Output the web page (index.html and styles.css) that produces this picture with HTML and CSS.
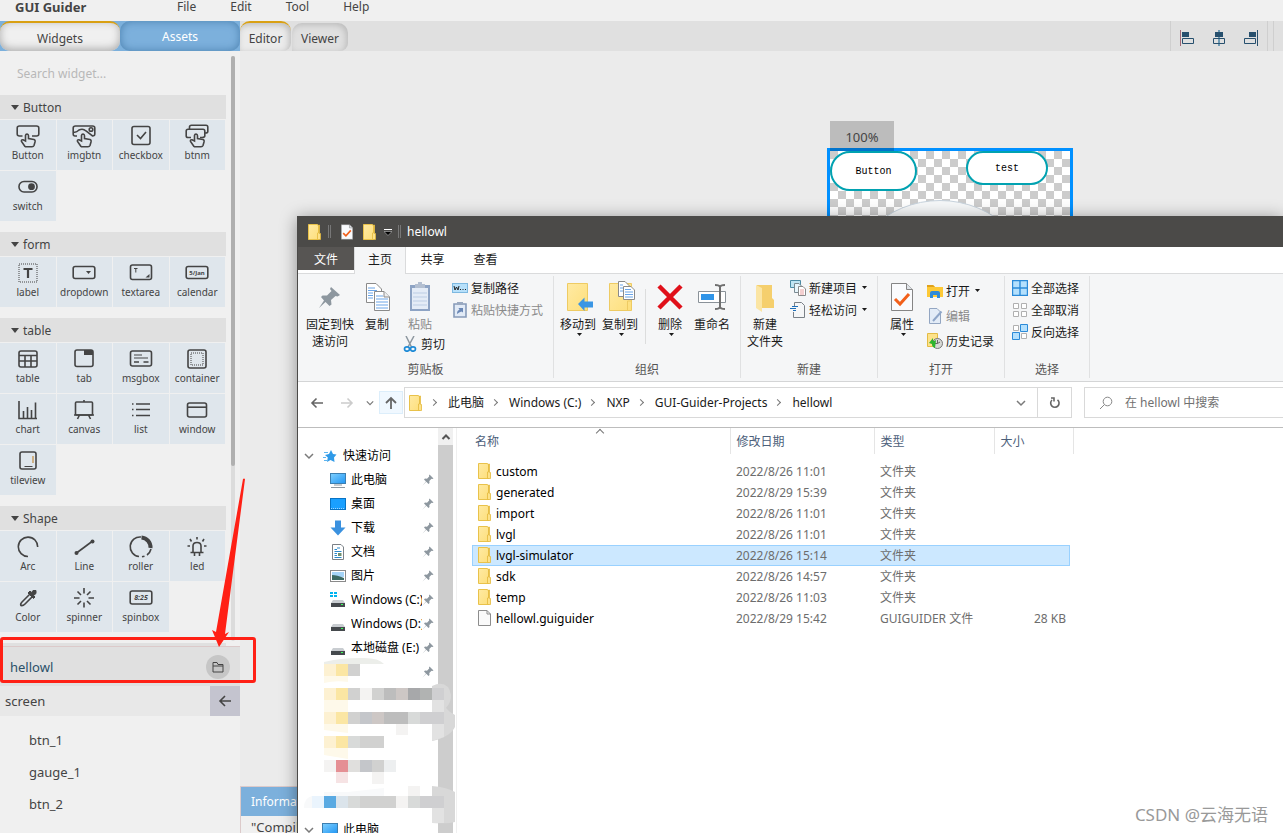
FILE: index.html
```
<!DOCTYPE html>
<html lang="zh-CN">
<head>
  <meta charset="UTF-8">
  <meta name="viewport" content="width=device-width, initial-scale=1.0">
  <title>GUI Guider</title>
  <link rel="stylesheet" href="styles.css">
</head>
<body>
  <!-- icon sprite -->
  <svg class="sprite" aria-hidden="true">
    <defs>
      <linearGradient id="g-blue" x1="0" y1="0" x2="1" y2="1"><stop offset="0" stop-color="#7fd0ff"/><stop offset="1" stop-color="#2196f3"/></linearGradient>
      <linearGradient id="g-gold" x1="0" y1="0" x2="1" y2="1"><stop offset="0" stop-color="#ffeaa3"/><stop offset="1" stop-color="#fddf7c"/></linearGradient>
    </defs>
    <g>
      <symbol id="hand" viewBox="0 0 24 24"><path d="M9 22.500L5.500 17.500Q5 15.500 7 15.700L9.500 17V11.500Q9.800 10 11 10Q12.400 10.200 12.500 11.800V14.500L18 15.500Q19.500 16 19 18L18 21.500Q17.500 22.800 16 22.800H9.500Z"/></symbol>
      <symbol id="w-button" viewBox="0 0 24 24"><path d="M6.500 12H3.500Q1.200 12 1.200 10V4Q1.200 2 3.500 2H20.500Q22.800 2 22.800 4V10Q22.800 12 20.500 12H16"/><use href="#hand"/></symbol>
      <symbol id="w-imgbtn" viewBox="0 0 24 24"><path d="M5 12H3Q1.200 12 1.200 10V4Q1.200 2 3.500 2H20.500Q22.800 2 22.800 4V10Q22.800 12 20.500 12L14 7Q11 4 7 6Q4 9 1.500 8"/><circle cx="19" cy="5.500" r="1.800"/><use href="#hand"/></symbol>
      <symbol id="w-checkbox" viewBox="0 0 24 24"><rect x="3" y="2.500" width="18" height="18" rx="2"/><path d="M8 11L11.500 14.500L17 8"/></symbol>
      <symbol id="w-btnm" viewBox="0 0 24 24"><path d="M4.500 5V3Q4.500 1.200 6.500 1.200H21Q22.800 1.200 22.800 3V7.500Q22.800 9 20.500 9H19.500"/><path d="M6 13.500H3Q1.200 13.500 1.200 12V7Q1.200 5.200 3 5.200H18Q19.800 5.200 19.800 7V12Q19.500 13.500 17 13.500H15"/><use href="#hand"/></symbol>
      <symbol id="w-switch" viewBox="0 0 24 24"><rect x="3" y="6.500" width="18" height="10.500" rx="5"/><circle cx="15.500" cy="11.700" r="2.600" fill="currentColor"/></symbol>
      <symbol id="w-label" viewBox="0 0 24 24"><rect x="3" y="3" width="18" height="18" stroke-width="1" stroke-dasharray="1 1"/><path d="M7.500 8H16.500M12 8V17" stroke-width="2.200"/></symbol>
      <symbol id="w-dropdown" viewBox="0 0 24 24"><rect x="1.200" y="5.500" width="21.600" height="12" rx="2"/><path d="M14 10H19L16.500 13Z" fill="currentColor" stroke="none"/></symbol>
      <symbol id="w-textarea" viewBox="0 0 24 24"><rect x="1.500" y="4" width="21" height="14.500" rx="2"/><path d="M5 7.500H8.500M6.800 7.500V11.500" stroke-width="1"/><path d="M20.500 13V16.500H16.500Z" fill="currentColor" stroke="none"/></symbol>
      <symbol id="w-table" viewBox="0 0 24 24"><rect x="3" y="4" width="18" height="16" rx="2"/><path d="M3 8.500H21M3 14H21M9 8.500V20M15 8.500V20"/></symbol>
      <symbol id="w-tab" viewBox="0 0 24 24"><rect x="3" y="3" width="18" height="16.500" rx="2"/><path d="M12 3H21V8H12Z" fill="currentColor" stroke="none"/></symbol>
      <symbol id="w-msgbox" viewBox="0 0 24 24"><rect x="1.500" y="4" width="21" height="15" rx="2"/><path d="M5 8H13M5 11H19" stroke-width="1"/><path d="M5 15H10M14.500 15H19.500"/></symbol>
      <symbol id="w-container" viewBox="0 0 24 24"><rect x="3" y="3" width="18" height="18" rx="2"/><rect x="6" y="6" width="12" height="12" stroke-width="1" stroke-dasharray="1 1"/></symbol>
      <symbol id="w-chart" viewBox="0 0 24 24"><path d="M3 3V20.500H21M7.500 20V13M11.500 20V9M15.500 20V12M19.500 20V4.500"/></symbol>
      <symbol id="w-canvas" viewBox="0 0 24 24"><rect x="3.500" y="4" width="17" height="13" rx="1"/><path d="M2 17H22M12 4V2M7.500 17L5.500 21M16.500 17L18.500 21"/></symbol>
      <symbol id="w-list" viewBox="0 0 24 24"><path d="M7 6H21M7 11.500H21M7 17.500H21M3 6H4.500M3 11.500H4.500M3 17.500H4.500"/></symbol>
      <symbol id="w-window" viewBox="0 0 24 24"><rect x="2.500" y="5" width="19" height="14" rx="2"/><path d="M2.500 9.200H21.500"/></symbol>
      <symbol id="w-tileview" viewBox="0 0 24 24"><rect x="4" y="3" width="16" height="17" rx="2"/><path d="M8.500 17.500H16.500" stroke-width="1"/><path d="M17 7V14" stroke="#c9a26a"/></symbol>
      <symbol id="w-arc" viewBox="0 0 24 24"><path d="M12 21.500A9.700 9.700 0 1 1 21.700 12"/></symbol>
      <symbol id="w-line" viewBox="0 0 24 24"><path d="M4.500 18L20 6.500"/><circle cx="4.500" cy="18" r="2" fill="currentColor" stroke="none"/><circle cx="20.500" cy="6.500" r="2" fill="currentColor" stroke="none"/></symbol>
      <symbol id="w-roller" viewBox="0 0 24 24"><path d="M10 21.500A9.800 9.800 0 0 1 12 2M22 14Q21 18 18 20M15.500 21.200L13 21.800"/><path d="M12.500 2.500A9.800 9.800 0 0 1 21.500 13" stroke-width="4"/></symbol>
      <symbol id="w-led" viewBox="0 0 24 24"><path d="M8 17V11Q8 7.500 12 7.500Q16 7.500 16 11V17M5.500 17.500H18.500M9.500 17.500V21M14.500 17.500V21M12 4.500V2M6.500 6.500L5 4M17.500 6.500L19 4M5 11H2.500M19 11H21.500"/></symbol>
      <symbol id="w-color" viewBox="0 0 24 24"><path d="M14 8L6 16Q4 18 5 19.500Q7 20 9 18L16.500 10.500"/><path d="M12 7L14 5L15.500 6.500L17 4.500H20V7.500L17.500 9.500L19 11L17.500 12.500Z" fill="currentColor" stroke-width="1"/></symbol>
      <symbol id="w-spinner" viewBox="0 0 24 24"><path d="M12 2V7.500M12 16.500V21.500M2 12H7.500M16.500 12H22M5.500 5.500L9 9M15 15L18.500 18.500M5.500 18.500L9 15M15 9L18.500 5.500"/></symbol>

      <symbol id="folder" viewBox="0 0 14 16"><path d="M.5.5H9.500L10.500 2V15.500H.5Z" fill="url(#g-gold)" stroke="#e9c24a"/><path d="M10.500 1V9H9.500V15.500H12.500V9.500H11.500V1Z" fill="#fde28a" stroke="#e3b93b" stroke-width=".8"/></symbol>
      <symbol id="file" viewBox="0 0 14 16"><path d="M.5.5H9L12.500 4V15.500H.5Z" fill="#fafafa" stroke="#8d8d8d"/><path d="M9 .5V4H12.500" fill="none" stroke="#8d8d8d"/></symbol>
      <symbol id="checked-file" viewBox="0 0 22 28"><path d="M.5.5H15.500L21.500 6.500V27.500H.5Z" fill="#fafbfd" stroke="#858585"/><path d="M15.500.5V6.500H21.500" fill="#dfe3e8" stroke="#858585"/><path d="M4 16L9 21L18 11" fill="none" stroke="#f2601b" stroke-width="3"/></symbol>
      <symbol id="pin" viewBox="0 0 12 12"><path d="M7.500.5L11.500 4.500L10.300 5L9.500 4.800L7.300 7L7.500 9L6.500 10L4.300 7.800L.5 11.500L4 7.500L2 5.500L3 4.500L5 4.700L7.200 2.500L7 1.500Z" fill="#8d979f"/></symbol>
      <symbol id="monitor" viewBox="0 0 16 16"><rect x=".5" y="1.500" width="15" height="10" fill="url(#g-blue)" stroke="#3c7fb1"/><path d="M4 13H12M1 15.500H15" stroke="#8d979f"/></symbol>
      <symbol id="desktop" viewBox="0 0 16 16"><rect x=".5" y="2.500" width="15" height="11" fill="#1aa0ff" stroke="#0873c4"/><path d="M1 12.500H15" stroke="#9fd6ff" stroke-dasharray="1 1"/></symbol>
      <symbol id="download" viewBox="0 0 16 16"><path d="M5 .5H11V7.500H15.500L8 15.500L.5 7.500H5Z" fill="#3a91df"/></symbol>
      <symbol id="doc" viewBox="0 0 16 16"><path d="M2.500.5H11L13.500 3V15.500H2.500Z" fill="#fff" stroke="#7b8187"/><path d="M7 4H10M4.500 5.500H7M4.500 7.500H11.500M4.500 9.500H7M4.500 11.500H7M4.500 13.500H11.500" stroke="#2b88c9"/><path d="M8 9H11.500V12H8Z" fill="#6f8f6f"/></symbol>
      <symbol id="picture" viewBox="0 0 16 16"><rect x=".5" y="2.500" width="15" height="11" fill="#fff" stroke="#8a8a8a"/><path d="M2 4H14V9H2Z" fill="#a5d4f7"/><path d="M2 7Q7 7 14 10V12H2Z" fill="#3c6a63"/></symbol>
      <symbol id="drive" viewBox="0 0 16 16"><path d="M3 8H13L15 11H1Z" fill="#c9cdd1"/><rect x="1" y="11" width="14" height="4" fill="#45494d"/><rect x="11" y="12" width="2" height="1" fill="#3cff5a"/></symbol>
      <symbol id="windrive" viewBox="0 0 16 16"><use href="#drive"/><path d="M0 0H3V2H0ZM4 0H7V2H4ZM0 3H3V5H0ZM4 3H7V5H4Z" fill="#00b4f0"/></symbol>
      <symbol id="star" viewBox="0 0 16 16"><path d="M9 2L11 6L14.500 6.500L12 9.500L12.500 14L8.500 12L5 14L5.800 9.500L3 7L7 6Z" fill="#2f9ae8"/><path d="M2 4.500H6M1 9.500H4M2 12.500H5" stroke="#5cb4f0"/></symbol>
      <symbol id="chev" viewBox="0 0 10 10"><path d="M1 3L5 7L9 3" fill="none" stroke="#7a7a7a" stroke-width="1.500"/></symbol>
      <symbol id="caret" viewBox="0 0 5 3"><path d="M0 0H5L2.500 3Z" fill="#1a1a1a"/></symbol>

      <symbol id="r-pin" viewBox="0 0 32 32"><path d="M17 6L26 14L23.500 15.500L21.500 15L17 19L17.500 23.500L15.500 25L11.500 21L5 27L10 19.500L7 16L8.500 14.500L13 14.500L17.500 10L16 8Z" fill="#8d979f"/></symbol>
      <symbol id="r-copy" viewBox="0 0 32 32"><g fill="#fff" stroke="#8a8a8a"><path d="M5.500 2.500H15L20.500 8V21.500H5.500Z"/><path d="M13.500 10.500H23L28.500 16V29.500H13.500Z"/><path d="M23 10.500V16H28.500" fill="#eee"/></g><path d="M7 7H14M7 9.500H16M7 12H12M7 14.500H12M7 17H12M15 15H22M15 18H27M15 21H27M15 24H27M15 27H27" stroke="#6aa5e8"/></symbol>
      <symbol id="r-paste" viewBox="0 0 32 32"><path d="M6 4H26V30H6Z" fill="#8da3c4"/><path d="M8 7H24V28H8Z" fill="#e4ecf7"/><path d="M11 3H14V1H18V3H21V7H11Z" fill="#b3bfd1"/><path d="M9 12H23M9 16H23M9 20H23M9 24H23" stroke="#bccde4"/></symbol>
      <symbol id="r-path" viewBox="0 0 16 16"><rect x=".5" y="3.500" width="15" height="9" fill="#b7e0fa" stroke="#7db8e0"/><path d="M2 6L3 10L4.500 7L6 10L7 6M8 9.500H9M10.500 9.500H11.500M13 9.500H14" fill="none" stroke="#222"/></symbol>
      <symbol id="r-pastelink" viewBox="0 0 16 16"><path d="M2 2H14V15H2Z" fill="#e1eaf6" stroke="#879bb9" stroke-width="1.600"/><path d="M5 0H11V3H5Z" fill="#9aa9c0"/><path d="M5 12Q5 8 7.500 8L6.500 6H11V10.500L9.500 9.500Q7 10 5 12Z" fill="#6a87b5"/></symbol>
      <symbol id="r-cut" viewBox="0 0 16 16"><path d="M4 0L9.500 11M12 0L6 11" stroke="#8d979f" stroke-width="1.500"/><ellipse cx="5" cy="13" rx="2.500" ry="2.200" fill="none" stroke="#1d8ad6" stroke-width="1.700"/><ellipse cx="11" cy="13" rx="2.500" ry="2.200" fill="none" stroke="#1d8ad6" stroke-width="1.700"/></symbol>
      <symbol id="r-move" viewBox="0 0 32 32"><path d="M5.500 2.500H25.500V29.500H5.500Z" fill="url(#g-gold)" stroke="#eecb63"/><path d="M16 23L22.500 16.500V20.500H31V26.500H22.500V30Z" fill="#3a96e4"/></symbol>
      <symbol id="r-copyto" viewBox="0 0 32 32"><path d="M5.500 2.500H27.500V29.500H5.500ZM23.500 29.500V20H27.500" fill="url(#g-gold)" stroke="#eecb63"/><path d="M14.500.5H21L25 4.500V15.500H14.500Z" fill="#fff" stroke="#8a8a8a"/><path d="M19.500 5.500H27L30.500 9V18.500H19.500Z" fill="#fff" stroke="#8a8a8a"/><path d="M16 4H19M16 7H19M16 10H19M21 8.500H27M21 11H29M21 13.500H29M21 16H29" stroke="#6aa5e8"/></symbol>
      <symbol id="r-delete" viewBox="0 0 32 32"><path d="M5 5L27 27M27 5L5 27" stroke="#e0101a" stroke-width="4.500"/></symbol>
      <symbol id="r-rename" viewBox="0 0 32 32"><path d="M2.500 10.500H29.500V21.500H2.500Z" fill="#fff" stroke="#8a9299"/><path d="M5 13H18V19H5Z" fill="#2f94e8"/><path d="M19 4Q23.500 4 24 6Q24.500 4 29 4M24 6V26M19 28Q23.500 28 24 26Q24.500 28 29 28" fill="none" stroke="#6f6f6f" stroke-width="2"/></symbol>
      <symbol id="r-newfolder" viewBox="0 0 32 32"><path d="M8 4H23V17L25 19V27H8Z" fill="#f5cf6d"/><path d="M7 4L13 7V31L7 27Z" fill="#fbe5a4"/></symbol>
      <symbol id="r-newitem" viewBox="0 0 16 16"><path d="M.5.5H10.500V7.500H.5Z" fill="#bfe4f2" stroke="#4b8aa4"/><path d="M4.500 3.500H9L11.500 6V12.500H4.500Z" fill="#e8f5fb" stroke="#7a8a92"/><path d="M8.500 6.500H13L15.500 9V15.500H8.500Z" fill="#fff" stroke="#8a8a8a"/><path d="M10 10H14M10 12H14M10 14H14" stroke="#e9a0a0"/></symbol>
      <symbol id="r-easy" viewBox="0 0 16 16"><path d="M4.500.5H11.500L14.500 3.500V15.500H3.500V10M4.500.5V4" fill="none" stroke="#7a8086"/><path d="M2 4.500H8M0 6.500H6M3 8.500H6" stroke="#1f6fb8" stroke-width="1.200"/></symbol>
      <symbol id="r-open" viewBox="0 0 16 16"><path d="M0 2H6L8 4H16V14H0Z" fill="#fdc936"/><path d="M0 2H6L8 4H0Z" fill="#e0a21b"/><path d="M3 15V10Q3 8 5 8H11Q13 8 13 10V15H10V12H6V15Z" fill="#2f8ad8"/></symbol>
      <symbol id="r-edit" viewBox="0 0 16 16"><path d="M2.500.5H10L13.500 4V15.500H2.500Z" fill="#e3ecf7" stroke="#93a6c2"/><path d="M14.500 3.500L6 13" stroke="#8fa6c8" stroke-width="2"/></symbol>
      <symbol id="r-history" viewBox="0 0 16 16"><path d="M.5.5H10.500V13.500H.5Z" fill="#fde28a" stroke="#e3bb45"/><circle cx="10.500" cy="10.500" r="5" fill="#d6d8d4" stroke="#777"/><path d="M10.500 7V10.500L13 9M10.500 10.500H8" fill="none" stroke="#666"/><path d="M2 10L6 5V8Q8 8 9 7L8 15Q5 14 5 11Z" fill="#2db52d"/></symbol>
      <symbol id="r-all" viewBox="0 0 16 16"><path d="M.5.5H15.500V15.500H.5ZM8 .5V15.500M.5 8H15.500" fill="#b4e0fd" stroke="#2b8ad8" stroke-width="1.400"/></symbol>
      <symbol id="r-none" viewBox="0 0 16 16"><path d="M1.500 1.500H6.500V6.500H1.500ZM9.500 1.500H14.500V6.500H9.500ZM1.500 9.500H6.500V14.500H1.500ZM9.500 9.500H14.500V14.500H9.500Z" fill="#fff" stroke="#b0b0b0"/></symbol>
      <symbol id="r-invert" viewBox="0 0 16 16"><path d="M1.500 1.500H6.500V6.500H1.500ZM9.500 9.500H14.500V14.500H9.500Z" fill="#fff" stroke="#b0b0b0"/><path d="M8.500.5H15.500V7.500H8.500ZM.5 8.500H7.500V15.500H.5Z" fill="#b4e0fd" stroke="#2b8ad8"/></symbol>
    </g>
  </svg>

  <div class="app">
    <header class="menubar">
      <strong class="brand">GUI Guider</strong>
      <nav class="menus">
        <a href="#">File</a><a href="#">Edit</a><a href="#">Tool</a><a href="#">Help</a>
      </nav>
    </header>

    <div class="workspace">
      <aside class="sidebar">
        <div class="side-tabs">
          <button class="side-tab active">Widgets</button>
          <button class="side-tab">Assets</button>
        </div>

        <div class="widgets">
          <div class="widget-list">
            <input class="widget-search" type="text" placeholder="Search widget..." aria-label="Search widget">

            <h3 class="category">Button</h3>
            <div class="tiles">
              <button class="tile"><svg><use href="#w-button"/></svg>Button</button>
              <button class="tile"><svg><use href="#w-imgbtn"/></svg>imgbtn</button>
              <button class="tile"><svg><use href="#w-checkbox"/></svg>checkbox</button>
              <button class="tile"><svg><use href="#w-btnm"/></svg>btnm</button>
              <button class="tile"><svg><use href="#w-switch"/></svg>switch</button>
            </div>

            <h3 class="category">form</h3>
            <div class="tiles">
              <button class="tile"><svg><use href="#w-label"/></svg>label</button>
              <button class="tile"><svg><use href="#w-dropdown"/></svg>dropdown</button>
              <button class="tile"><svg><use href="#w-textarea"/></svg>textarea</button>
              <button class="tile"><svg viewBox="0 0 24 24"><rect x="1.200" y="5.500" width="21.600" height="12" rx="2"/><text x="12" y="14" text-anchor="middle" class="glyph">5/Jan</text></svg>calendar</button>
            </div>

            <h3 class="category">table</h3>
            <div class="tiles">
              <button class="tile"><svg><use href="#w-table"/></svg>table</button>
              <button class="tile"><svg><use href="#w-tab"/></svg>tab</button>
              <button class="tile"><svg><use href="#w-msgbox"/></svg>msgbox</button>
              <button class="tile"><svg><use href="#w-container"/></svg>container</button>
              <button class="tile"><svg><use href="#w-chart"/></svg>chart</button>
              <button class="tile"><svg><use href="#w-canvas"/></svg>canvas</button>
              <button class="tile"><svg><use href="#w-list"/></svg>list</button>
              <button class="tile"><svg><use href="#w-window"/></svg>window</button>
              <button class="tile"><svg><use href="#w-tileview"/></svg>tileview</button>
            </div>

            <h3 class="category">Shape</h3>
            <div class="tiles">
              <button class="tile"><svg><use href="#w-arc"/></svg>Arc</button>
              <button class="tile"><svg><use href="#w-line"/></svg>Line</button>
              <button class="tile"><svg><use href="#w-roller"/></svg>roller</button>
              <button class="tile"><svg><use href="#w-led"/></svg>led</button>
              <button class="tile"><svg><use href="#w-color"/></svg>Color</button>
              <button class="tile"><svg><use href="#w-spinner"/></svg>spinner</button>
              <button class="tile"><svg viewBox="0 0 24 24"><rect x="1.200" y="5" width="21.600" height="13" rx="2"/><text x="12" y="14" text-anchor="middle" class="glyph glyph-digits">8:25</text></svg>spinbox</button>
            </div>
            <div class="category-edge"></div>
          </div>
          <div class="side-scroll"><div class="side-thumb"></div></div>
        </div>

        <div class="project">
          <span>hellowl</span>
          <button class="open-folder" aria-label="Open project folder">
            <svg viewBox="0 0 12 12"><path d="M1 11V1.500H5L6 3.500H11V11ZM1 5H11"/></svg>
          </button>
        </div>
        <div class="screen-row">
          <span>screen</span>
          <button class="back" aria-label="Back">
            <svg viewBox="0 0 14 12"><path d="M13 6H2M7 1L2 6L7 11"/></svg>
          </button>
        </div>
        <ul class="tree">
          <li>btn_1</li>
          <li>gauge_1</li>
          <li>btn_2</li>
        </ul>
      </aside>

      <main class="editor">
        <div class="editor-bar">
          <button class="editor-tab active">Editor</button>
          <button class="editor-tab">Viewer</button>
          <div class="align-tools">
            <button aria-label="Align left"><svg viewBox="0 0 16 16"><path class="edge" d="M1.500 0V16"/><path class="solid" d="M3 2H10V7H3Z"/><path class="line" d="M3.500 8.500H14.500V13.500H3.500Z"/></svg></button>
            <button aria-label="Align center"><svg viewBox="0 0 16 16"><path class="mid" d="M8 0V16"/><path class="solid" d="M4 2H12V7H4Z"/><path class="line" d="M2.500 8.500H13.500V13.500H2.500Z"/></svg></button>
            <button aria-label="Align right"><svg viewBox="0 0 16 16"><path class="line" d="M14.500 0V16"/><path class="solid" d="M6 2H13V7H6Z"/><path class="line" d="M1.500 8.500H12.500V13.500H1.500Z"/></svg></button>
          </div>
          <div class="more-tools"></div>
        </div>

        <div class="canvas">
          <div class="device">
            <div class="gauge"></div>
            <button class="lv-btn lv-btn-1">Button</button>
            <button class="lv-btn lv-btn-2">test</button>
          </div>
          <span class="zoom">100%</span>
        </div>

        <section class="info">
          <h4>Information</h4>
          <p>"Compile"</p>
        </section>
      </main>
    </div>

    <!-- file manager window -->
    <section class="explorer">
      <div class="titlebar">
        <svg class="i-folder"><use href="#folder"/></svg>
        <i class="bar"></i>
        <svg class="i-check"><use href="#checked-file"/></svg>
        <svg class="i-folder"><use href="#folder"/></svg>
        <svg class="i-more" viewBox="0 0 8 8"><path d="M0 1.500H8" stroke="#fff"/><path d="M0 3.500H8L4 7.500Z" fill="#000" stroke="#ddd" stroke-width=".5"/></svg>
        <i class="bar"></i>
        <span>hellowl</span>
      </div>

      <div class="ribbon-tabs">
        <button class="file-tab">文件</button>
        <button class="home-tab">主页</button>
        <button>共享</button>
        <button>查看</button>
      </div>

      <div class="ribbon">
        <div class="group g-clip">
          <div class="tools">
            <button class="big pin-tool"><svg><use href="#r-pin"/></svg>固定到快<br>速访问</button>
            <button class="big copy-tool"><svg><use href="#r-copy"/></svg>复制</button>
            <div class="paste-col">
              <button class="big off"><svg><use href="#r-paste"/></svg>粘贴</button>
              <button class="small"><svg><use href="#r-cut"/></svg>剪切</button>
            </div>
            <div class="stack">
              <button class="small"><svg><use href="#r-path"/></svg>复制路径</button>
              <button class="small off"><svg><use href="#r-pastelink"/></svg>粘贴快捷方式</button>
            </div>
          </div>
          <div class="group-name">剪贴板</div>
        </div>
        <div class="group g-org">
          <div class="tools">
            <button class="big"><svg><use href="#r-move"/></svg>移动到<svg class="caret"><use href="#caret"/></svg></button>
            <button class="big"><svg><use href="#r-copyto"/></svg>复制到<svg class="caret"><use href="#caret"/></svg></button>
            <i class="sep"></i>
            <button class="big"><svg><use href="#r-delete"/></svg>删除<svg class="caret"><use href="#caret"/></svg></button>
            <button class="big"><svg><use href="#r-rename"/></svg>重命名</button>
          </div>
          <div class="group-name">组织</div>
        </div>
        <div class="group g-new">
          <div class="tools">
            <button class="big"><svg><use href="#r-newfolder"/></svg>新建<br>文件夹</button>
            <div class="stack">
              <button class="small"><svg><use href="#r-newitem"/></svg>新建项目<svg class="caret"><use href="#caret"/></svg></button>
              <button class="small"><svg><use href="#r-easy"/></svg>轻松访问<svg class="caret"><use href="#caret"/></svg></button>
            </div>
          </div>
          <div class="group-name">新建</div>
        </div>
        <div class="group g-open">
          <div class="tools">
            <button class="big"><svg class="props"><use href="#checked-file"/></svg>属性<svg class="caret"><use href="#caret"/></svg></button>
            <div class="stack loose">
              <button class="small"><svg><use href="#r-open"/></svg>打开<svg class="caret"><use href="#caret"/></svg></button>
              <button class="small off"><svg><use href="#r-edit"/></svg>编辑</button>
              <button class="small"><svg><use href="#r-history"/></svg>历史记录</button>
            </div>
          </div>
          <div class="group-name">打开</div>
        </div>
        <div class="group g-select">
          <div class="tools">
            <div class="stack">
              <button class="small"><svg><use href="#r-all"/></svg>全部选择</button>
              <button class="small"><svg><use href="#r-none"/></svg>全部取消</button>
              <button class="small"><svg><use href="#r-invert"/></svg>反向选择</button>
            </div>
          </div>
          <div class="group-name">选择</div>
        </div>
      </div>

      <div class="address">
        <button class="nav-btn" aria-label="Back"><svg viewBox="0 0 14 12"><path d="M13 6H2M6.500 1.500L2 6L6.500 10.500"/></svg></button>
        <button class="nav-btn dim" aria-label="Forward"><svg viewBox="0 0 14 12"><path d="M1 6H12M7.500 1.500L12 6L7.500 10.500"/></svg></button>
        <button class="recent" aria-label="Recent"><svg><use href="#chev"/></svg></button>
        <button class="up" aria-label="Up"><svg viewBox="0 0 14 14"><path d="M7 13V2M2 7L7 2L12 7"/></svg></button>
        <div class="crumbs">
          <svg class="i-folder"><use href="#folder"/></svg>
          <i class="arrow"></i><a href="#">此电脑</a>
          <i class="arrow"></i><a href="#">Windows (C:)</a>
          <i class="arrow"></i><a href="#">NXP</a>
          <i class="arrow"></i><a href="#">GUI-Guider-Projects</a>
          <i class="arrow"></i><a href="#">hellowl</a>
          <button class="crumb-drop" aria-label="History"><svg><use href="#chev"/></svg></button>
          <button class="refresh" aria-label="Refresh"><svg viewBox="0 0 12 12"><path d="M3 3A4.200 4.200 0 1 0 8.500 2.800M2 1H5V4.500"/></svg></button>
        </div>
        <label class="find">
          <svg viewBox="0 0 14 14"><circle cx="8.500" cy="5.500" r="4.300"/><path d="M5.500 8.500L1 13"/></svg>
          <input type="text" placeholder="在 hellowl 中搜索" aria-label="搜索">
        </label>
      </div>

      <div class="panes">
        <div class="navpane">
          <ul class="places">
            <li class="root"><svg class="twist"><use href="#chev"/></svg><svg class="ico"><use href="#star"/></svg>快速访问</li>
            <li><svg class="ico"><use href="#monitor"/></svg><span>此电脑</span><svg class="pin"><use href="#pin"/></svg></li>
            <li><svg class="ico"><use href="#desktop"/></svg><span>桌面</span><svg class="pin"><use href="#pin"/></svg></li>
            <li><svg class="ico"><use href="#download"/></svg><span>下载</span><svg class="pin"><use href="#pin"/></svg></li>
            <li><svg class="ico"><use href="#doc"/></svg><span>文档</span><svg class="pin"><use href="#pin"/></svg></li>
            <li><svg class="ico"><use href="#picture"/></svg><span>图片</span><svg class="pin"><use href="#pin"/></svg></li>
            <li><svg class="ico"><use href="#windrive"/></svg><span>Windows (C:)</span><svg class="pin"><use href="#pin"/></svg></li>
            <li><svg class="ico"><use href="#drive"/></svg><span>Windows (D:)</span><svg class="pin"><use href="#pin"/></svg></li>
            <li><svg class="ico"><use href="#drive"/></svg><span>本地磁盘 (E:)</span><svg class="pin"><use href="#pin"/></svg></li>
            <li><span></span><svg class="pin"><use href="#pin"/></svg></li>
            <li class="hidden-rows"></li>
            <li class="root"><svg class="twist"><use href="#chev"/></svg><svg class="ico"><use href="#monitor"/></svg>此电脑</li>
          </ul>
          <div class="nav-scroll"><button aria-label="Scroll up"><svg viewBox="0 0 10 10"><path d="M1.500 7L5 3.500L8.500 7"/></svg></button></div>
          <!-- censored entries -->
          <svg class="mosaic" viewBox="0 0 170 176">
            <path fill="#d8d8d8" d="M132 29Q148 22 151 38Q151 46 146 51Q150 56 155 58V70Q150 80 132 84Z"/>
            <path fill="#d8d8d8" d="M132 129Q146 130 155 135V165Q148 167 132 166Z"/>
            <path fill="#e2e2e2" d="M132 43H144V55H132ZM132 67H144V80L132 84ZM132 151H144V166H132Z"/>
            <path fill="#eceeea" d="M24 5Q40 1 60 1Q78 0 84 7H24Z"/>
            <path fill="#fdf1d2" d="M24 7H36V19H24ZM24 31H36V43H24ZM24 55H36V67H24ZM24 79H36V91H24Z"/>
            <path fill="#fbe6a3" d="M36 7H48V19H36ZM36 31H48V43H36ZM36 55H48V67H36ZM36 79H48V91H36Z"/>
            <path fill="#fef9ea" d="M24 19H48V25Q36 23 24 26ZM24 43H48V55H24ZM24 67H48V76L24 73ZM24 91H48V102L24 98Z"/>
            <path fill="#d1d1d0" d="M48 7H60V19H48ZM48 31H60V43H48ZM72 31H84V43H72ZM48 55H60V67H48ZM60 79H84V91H60ZM72 103H84V115H72ZM60 139H96V151H60Z"/>
            <path fill="#bdbdbd" d="M84 31H96V43H84ZM84 55H108V67H84Z"/>
            <path fill="#cdc7c5" d="M96 31H108V43H96ZM72 55H84V67H72Z"/>
            <path fill="#a7a8aa" d="M108 31H120V43H108Z"/>
            <path fill="#b1b3b2" d="M120 31H132V43H120Z"/>
            <path fill="#c4c6ca" d="M60 55H72V67H60ZM60 103H72V115H60Z"/>
            <path fill="#d8dad9" d="M108 55H120V67H108ZM48 79H60V91H48ZM48 139H60V151H48ZM108 139H120V151H108Z"/>
            <path fill="#cfcfd1" d="M132 31H144V43H132ZM120 55H144V67H120ZM120 139H144V151H120Z"/>
            <path fill="#f4f3f2" d="M60 31H72V43H60ZM24 103H36V115H24ZM96 67H108V78H96ZM72 115H84V127H72ZM96 139H108V151H96ZM108 129H120V139H108Z"/>
            <path fill="#edeff0" d="M84 103H96V115H84Z"/>
            <path fill="#e58f94" d="M36 103H48V115H36Z"/>
            <path fill="#f6e3e4" d="M36 115H48V126H36Z"/>
            <path fill="#e0dfdd" d="M48 103H60V115H48Z"/>
            <path fill="#eaf4fd" d="M12 139H24V151H12Z"/>
            <path fill="#f8f9fa" d="M4 151Q4 141 12 139V151ZM48 135L84 131V139H24V135Z"/>
            <path fill="#5aaae2" d="M24 139H36V151H24Z"/>
            <path fill="#dbe4eb" d="M36 139H48V151H36Z"/>
          </svg>
        </div>

        <div class="filepane">
          <table class="files">
            <colgroup><col class="c-name"><col class="c-date"><col class="c-type"><col class="c-size"></colgroup>
            <thead>
              <tr><th class="sorted">名称</th><th>修改日期</th><th>类型</th><th>大小</th></tr>
            </thead>
            <tbody>
              <tr><td><svg><use href="#folder"/></svg>custom</td><td>2022/8/26 11:01</td><td>文件夹</td><td></td></tr>
              <tr><td><svg><use href="#folder"/></svg>generated</td><td>2022/8/29 15:39</td><td>文件夹</td><td></td></tr>
              <tr><td><svg><use href="#folder"/></svg>import</td><td>2022/8/26 11:01</td><td>文件夹</td><td></td></tr>
              <tr><td><svg><use href="#folder"/></svg>lvgl</td><td>2022/8/26 11:01</td><td>文件夹</td><td></td></tr>
              <tr class="selected"><td><svg><use href="#folder"/></svg>lvgl-simulator</td><td>2022/8/26 15:14</td><td>文件夹</td><td></td></tr>
              <tr><td><svg><use href="#folder"/></svg>sdk</td><td>2022/8/26 14:57</td><td>文件夹</td><td></td></tr>
              <tr><td><svg><use href="#folder"/></svg>temp</td><td>2022/8/26 11:03</td><td>文件夹</td><td></td></tr>
              <tr><td><svg><use href="#file"/></svg>hellowl.guiguider</td><td>2022/8/29 15:42</td><td>GUIGUIDER 文件</td><td>28 KB</td></tr>
            </tbody>
          </table>
        </div>
      </div>
    </section>

    <!-- red marker around the project row -->
    <div class="marker"></div>
    <svg class="marker-arrow" viewBox="0 0 40 172"><path d="M32 2Q33 1 34 2L14 157L18 155L8 170L1 153L5 155Z"/></svg>
    <div class="watermark">CSDN @云海无语</div>
  </div>
</body>
</html>
```
FILE: styles.css
```
* {
  box-sizing: border-box;
}
body {
  margin: 0;
  font-family: "Noto Sans", "Noto Sans CJK SC", sans-serif;
  font-size: 12px;
  color: #444;
}
button, input {
  font: inherit;
  color: inherit;
  border: none;
  background: none;
  padding: 0;
}
a {
  color: inherit;
  text-decoration: none;
}
ul, h3, h4, p {
  margin: 0;
  padding: 0;
  list-style: none;
  font-weight: normal;
}
svg {
  flex: none;
  display: block;
}
.sprite {
  position: absolute;
  width: 0;
  height: 0;
}
.app {
  position: relative;
  height: 100vh;
  overflow: hidden;
  display: flex;
  flex-direction: column;
  background: #f0f0f0;
}

/* menu */
.menubar {
  display: flex;
  height: 21px;
  line-height: 14px;
  padding-left: 15px;
  flex: none;
}
.brand {
  width: 162px;
  font-size: 13px;
}
.menus {
  display: flex;
  gap: 34px;
}
.workspace {
  flex: 1;
  min-height: 0;
  display: flex;
}

/* sidebar */
.sidebar {
  width: 240px;
  flex: none;
  display: flex;
  flex-direction: column;
}
.side-tabs {
  display: flex;
  height: 30px;
  flex: none;
  background: #7cb0dc;
}
.side-tab {
  flex: 1;
  color: #fff;
  border-radius: 10px;
  box-shadow: inset 0 0 8px #4a7fae;
}
.side-tab.active {
  color: #444;
  background: #f0f0f0;
  border-top: 2px solid #d9a013;
  padding-top: 2px;
  box-shadow: inset 0 -2px 8px #aaa;
}
.widgets {
  flex: 1;
  min-height: 0;
  display: flex;
  overflow: hidden;
}
.widget-list {
  width: 226px;
}
.widget-search {
  display: block;
  width: 100%;
  height: 44px;
  padding-left: 17px;
}
.widget-search::placeholder {
  color: #b8b8b8;
}
.category {
  height: 24px;
  line-height: 24px;
  font-size: 12px;
  background: #e0e0e0;
  padding: 1px 0 0 11px;
  margin-bottom: 1px;
  display: flex;
  align-items: center;
  gap: 4px;
}
.category::before {
  content: "";
  border: 4px solid transparent;
  border-top: 5px solid #444;
  border-bottom: 0;
}
.tiles {
  display: grid;
  grid-template-columns: repeat(4, 1fr);
  gap: 1px;
  margin-bottom: 11px;
  padding-right: 1px;
}
.tile {
  height: 50px;
  background: #dfe6ec;
  font-size: 10px;
  line-height: 15px;
  display: flex;
  flex-direction: column;
  align-items: center;
  padding-top: 4px;
}
.tile svg {
  width: 24px;
  height: 24px;
  fill: none;
  stroke: currentColor;
  stroke-width: 1.6;
}
.glyph {
  font-size: 6px;
  font-weight: bold;
  fill: #444;
  stroke: none;
}
.glyph-digits {
  font-size: 7px;
  font-style: italic;
}
.category-edge {
  height: 24px;
  background: #e0e0e0;
}
.side-scroll {
  width: 4px;
  margin: 5px 0 5px 5px;
  background: #dcdcdc;
  border-radius: 2px;
}
.side-thumb {
  height: 70%;
  background: #b0b0b0;
  border-radius: 2px;
}
.project {
  display: flex;
  align-items: center;
  justify-content: space-between;
  height: 40px;
  padding: 0 10px;
  font-size: 13px;
  color: #2b5069;
  background: #e0e0e0;
  border-top: 1px solid #dccaca;
}
.open-folder {
  width: 24px;
  height: 24px;
  border-radius: 50%;
  background: #c6c6c6;
  display: grid;
  place-items: center;
}
.open-folder svg {
  width: 12px;
  height: 12px;
  fill: none;
  stroke: #444;
}
.screen-row {
  display: flex;
  align-items: center;
  justify-content: space-between;
  height: 30px;
  padding-left: 5px;
  font-size: 13px;
  background: #e8e8e8;
}
.back {
  width: 30px;
  height: 30px;
  background: #c4c4cf;
  display: grid;
  place-items: center;
}
.back svg {
  width: 14px;
  height: 12px;
  fill: none;
  stroke: #444;
  stroke-width: 1.6;
}
.tree {
  height: 117px;
  padding: 8px 0 0 29px;
  font-size: 13px;
  line-height: 32px;
}

/* editor */
.editor {
  flex: 1;
  min-width: 0;
  display: flex;
  flex-direction: column;
  background: #ebebeb;
}
.editor-bar {
  display: flex;
  height: 30px;
  flex: none;
  background: #e0e0e0;
}
.editor-tab {
  width: 56px;
  border-radius: 10px 10px 8px 0;
  margin: 2px 0 0 1px;
  padding-top: 2px;
  box-shadow: inset -2px 2px 6px #bbb;
}
.editor-tab.active {
  width: 51px;
  margin: 0;
  border-top: 2px solid #d9a013;
  background: #ebebeb;
}
.align-tools {
  display: flex;
  align-items: center;
  margin-left: auto;
  border: 1px solid #cfcfcf;
  border-width: 0 1px;
}
.align-tools button {
  width: 32px;
  display: grid;
  place-items: center;
  padding-top: 4px;
}
.align-tools svg {
  width: 16px;
  height: 16px;
  fill: none;
}
.align-tools .solid {
  fill: #27506e;
}
.align-tools .line {
  stroke: #27506e;
}
.align-tools .edge {
  stroke: #a06a78;
}
.align-tools .mid {
  stroke: #6f9bb5;
  stroke-width: 2;
}
.more-tools {
  width: 10px;
  margin-left: 5px;
  border-left: 1px solid #cfcfcf;
}
.canvas {
  position: relative;
  flex: 1;
  min-height: 0;
}
.device {
  position: absolute;
  left: 587px;
  top: 97px;
  width: 246px;
  height: 326px;
  border: 3px solid #0090ff;
  background: repeating-conic-gradient(#fff 0 25%, #ccc 0 50%) 0 0 / 16px 16px;
}
.zoom {
  position: absolute;
  left: 590px;
  top: 70px;
  width: 64px;
  height: 30px;
  line-height: 32px;
  text-align: center;
  font-size: 13px;
  background: rgba(0, 0, 0, 0.2);
}
.lv-btn {
  position: absolute;
  top: 0;
  background: #fff;
  border: 2px solid #01a2b1;
  border-radius: 20px;
  color: #000;
  font-family: "Liberation Mono", monospace;
  font-size: 10px;
}
.lv-btn-1 {
  left: 0;
  width: 87px;
  height: 40px;
}
.lv-btn-2 {
  left: 136px;
  width: 82px;
  height: 34px;
}
.gauge {
  position: absolute;
  left: 10px;
  top: 49px;
  width: 200px;
  height: 200px;
  border-radius: 50%;
  border: 1px solid #c8d4de;
  background: #f6f8f9;
}
.info {
  height: 47px;
  border: 1px solid #dccaca;
  border-width: 1px 0 0 1px;
  background: #f0f0f0;
}
.info h4 {
  height: 29px;
  line-height: 30px;
  padding-left: 10px;
  font-size: 12px;
  color: #fff;
  background: #7cb0dc;
}
.info p {
  padding-left: 10px;
  font-size: 13px;
  line-height: 22px;
}

/* file manager */
.explorer {
  position: absolute;
  left: 297px;
  top: 216px;
  right: 0;
  bottom: 0;
  display: flex;
  flex-direction: column;
  background: #fff;
  color: #1a1a1a;
  border-left: 1px solid #4b4a48;
  box-shadow: 0 2px 16px rgba(0, 0, 0, 0.4);
}
.i-folder {
  width: 14px;
  height: 16px;
}
.titlebar {
  display: flex;
  align-items: center;
  height: 31px;
  flex: none;
  padding-left: 10px;
  color: #fff;
  background: #4b4a48;
}
.titlebar .bar {
  width: 3px;
  height: 13px;
  border: 1px solid #777;
  border-width: 0 1px;
  margin: 0 6px;
}
.titlebar .bar + svg {
  margin-left: 4px;
}
.i-check {
  width: 12px;
  height: 16px;
  margin-right: 10px;
}
.i-more {
  width: 8px;
  height: 8px;
  margin-left: 7px;
}
.ribbon-tabs {
  display: flex;
  height: 27px;
  flex: none;
  border-bottom: 1px solid #dadbdc;
}
.ribbon-tabs button {
  width: 53px;
  height: 24px;
}
.ribbon-tabs .file-tab {
  width: 56px;
  height: 23px;
  color: #fff;
  background: #575553;
}
.ribbon-tabs .home-tab {
  width: 52px;
  height: 27px;
  padding-bottom: 3px;
  background: #f5f6f7;
  border: 1px solid #dadbdc;
  border-width: 0 1px;
}
.ribbon {
  display: flex;
  height: 108px;
  flex: none;
  padding: 2px 0 3px;
  background: #f5f6f7;
  border-bottom: 1px solid #d4d5d6;
}
.group {
  display: flex;
  flex-direction: column;
  border-right: 1px solid #e0e1e2;
}
.g-clip {
  width: 256px;
}
.g-org {
  width: 187px;
}
.g-new {
  width: 137px;
}
.g-open {
  width: 127px;
}
.g-select {
  width: 85px;
}
.tools {
  flex: 1;
  display: flex;
}
.g-org .tools, .g-new .tools, .g-open .tools {
  padding-left: 3px;
}
.g-select .tools {
  padding-left: 7px;
}
.group-name {
  text-align: center;
  line-height: 16px;
  color: #555;
}
.big {
  width: 42px;
  line-height: 17px;
  display: flex;
  flex-direction: column;
  align-items: center;
  padding-top: 5px;
  white-space: nowrap;
  align-self: flex-start;
}
.big > svg {
  width: 32px;
  height: 32px;
  margin-bottom: 3px;
}
.big > .props {
  width: 22px;
  height: 28px;
  margin: 2px 0 5px;
}
.pin-tool {
  width: 64px;
}
.copy-tool {
  width: 30px;
}
.paste-col {
  width: 60px;
  padding-left: 7px;
}
.paste-col .small {
  margin: 2px 0 0 3px;
}
.small {
  display: flex;
  align-items: center;
  gap: 3px;
  height: 17px;
  white-space: nowrap;
}
.small > svg {
  width: 16px;
  height: 16px;
}
.small > .caret, .big > .caret {
  width: 5px;
  height: 3px;
  margin: 0 0 0 2px;
}
.off {
  color: #8a8a8a;
}
.stack {
  display: flex;
  flex-direction: column;
  gap: 5px;
  padding-top: 3px;
}
.stack.loose {
  gap: 8px;
  padding-top: 6px;
}
.g-new .stack, .g-open .stack {
  margin-left: 4px;
}
.sep {
  width: 1px;
  height: 55px;
  margin: 13px 3px 0 4px;
  background: #dcdddd;
}
.address {
  display: flex;
  align-items: center;
  height: 46px;
  flex: none;
  padding: 5px 0 9px;
  border-bottom: 1px solid #bdbdbd;
}
.address svg {
  fill: none;
}
.address > button {
  flex: none;
}
.nav-btn {
  padding-left: 12px;
  width: 30px;
}
.nav-btn svg {
  width: 14px;
  height: 12px;
  stroke: #666;
  stroke-width: 1.6;
}
.nav-btn.dim svg {
  stroke: #ccc;
}
.nav-btn + .recent {
  padding-left: 8px;
  width: 21px;
}
.recent svg {
  width: 8px;
  height: 8px;
}
.up {
  width: 24px;
  height: 23px;
  display: grid;
  place-items: center;
  background: #f0f8ff;
  border: 1px solid #dceefb;
}
.up svg {
  width: 14px;
  height: 14px;
  stroke: #666;
  stroke-width: 1.8;
}
.crumbs {
  display: flex;
  align-items: center;
  width: 668px;
  height: 31px;
  flex: none;
  margin-left: 1px;
  padding-left: 4px;
  border: 1px solid #d9d9d9;
}
.crumbs a {
  line-height: 16px;
}
.arrow {
  width: 5px;
  height: 5px;
  border: solid #777;
  border-width: 1px 1px 0 0;
  transform: rotate(45deg);
  margin: 0 12px 0 8px;
}
.crumb-drop {
  margin-left: auto;
  width: 32px;
  display: grid;
  place-items: center;
}
.crumb-drop svg {
  width: 10px;
  height: 10px;
}
.refresh {
  width: 34px;
  height: 29px;
  display: grid;
  place-items: center;
  border-left: 1px solid #d9d9d9;
}
.refresh svg {
  width: 12px;
  height: 12px;
  stroke: #666;
  stroke-width: 1.6;
}
.find {
  display: flex;
  align-items: center;
  flex: 1;
  min-width: 0;
  gap: 12px;
  height: 31px;
  margin-left: 12px;
  padding-left: 14px;
  border: 1px solid #d9d9d9;
  border-right: none;
}
.find svg {
  width: 14px;
  height: 14px;
  stroke: #888;
}
.find input {
  flex: 1;
  min-width: 0;
}
.find input::placeholder {
  color: #707070;
}
.panes {
  flex: 1;
  min-height: 0;
  display: flex;
}
.navpane {
  position: relative;
  width: 159px;
  flex: none;
  display: flex;
  border-right: 1px solid #f0f0f0;
}
.places {
  width: 140px;
  padding-top: 16px;
  overflow: hidden;
}
.places li {
  display: flex;
  align-items: center;
  height: 24px;
  line-height: 16px;
  padding-left: 32px;
  padding-right: 4px;
  color: #000;
}
.places .root {
  padding-left: 6px;
  gap: 5px;
}
.places span {
  flex: 1;
  margin-left: 5px;
  overflow: hidden;
  white-space: nowrap;
}
.places .hidden-rows {
  height: 134px;
}
.ico {
  width: 16px;
  height: 16px;
}
.twist {
  width: 10px;
  height: 10px;
  margin-right: 3px;
}
.pin {
  width: 12px;
  height: 12px;
}
.nav-scroll {
  width: 15px;
  background: #cdcdcd;
}
.nav-scroll button {
  width: 15px;
  height: 17px;
  background: #f0f0f0;
  display: grid;
  place-items: center;
}
.nav-scroll svg {
  width: 10px;
  height: 10px;
  fill: none;
  stroke: #555;
  stroke-width: 2;
}
.mosaic {
  position: absolute;
  left: 2px;
  top: 229px;
  width: 170px;
  height: 176px;
}
.filepane {
  flex: 1;
  min-width: 0;
  padding-left: 15px;
}
.files {
  width: 598px;
  table-layout: fixed;
  border-collapse: collapse;
  color: #6d6d6d;
}
.c-name { width: 258px; }
.c-date { width: 144px; }
.c-type { width: 120px; }
.files th {
  position: relative;
  height: 26px;
  padding: 0 0 0 6px;
  text-align: left;
  font-weight: normal;
  color: #4c607a;
  border-right: 1px solid #e5e5e5;
}
.files th:first-child {
  padding-left: 3px;
}
.files th:last-child {
  border-right: none;
}
.files th:last-child::after {
  content: "";
  position: absolute;
  top: 0;
  bottom: 0;
  right: -4px;
  border-right: 1px solid #e5e5e5;
}
.files .sorted::after {
  content: "";
  position: absolute;
  top: 2px;
  left: 125px;
  width: 5px;
  height: 5px;
  border: solid #777;
  border-width: 1px 0 0 1px;
  transform: rotate(45deg);
}
.files tbody::before {
  content: "";
  display: block;
  height: 7px;
}
.files td {
  height: 21px;
  padding: 0 0 0 6px;
  line-height: 16px;
  white-space: nowrap;
}
.files td:first-child {
  color: #000;
}
.files td:last-child {
  text-align: right;
  padding-right: 4px;
}
.files td svg {
  display: inline-block;
  vertical-align: -3px;
  width: 14px;
  height: 16px;
  margin-right: 4px;
}
.files .selected {
  background: #cce8ff;
  outline: 1px solid #99d1ff;
  outline-offset: -1px;
}

/* marker and watermark over everything */
.marker {
  position: absolute;
  left: 0;
  top: 637px;
  width: 256px;
  height: 46px;
  border: 3px solid #ff2015;
  border-radius: 3px;
}
.marker-arrow {
  position: absolute;
  left: 211px;
  top: 477px;
  width: 40px;
  height: 172px;
  fill: #ff2015;
}
.watermark {
  position: absolute;
  right: 15px;
  bottom: 6px;
  font-size: 17px;
  line-height: 24px;
  color: #999;
}
```
